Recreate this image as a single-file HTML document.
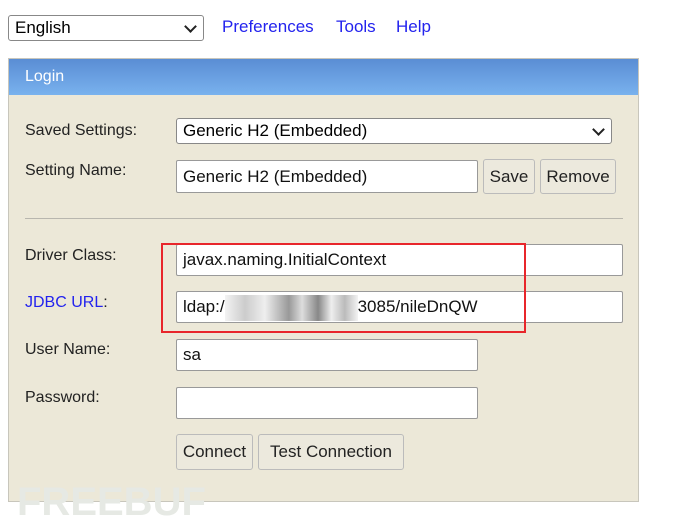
<!DOCTYPE html>
<html><head><style>
body{margin:0;width:690px;height:529px;background:#fff;position:relative;font-family:"Liberation Sans",sans-serif;overflow:hidden}
.a{position:absolute}
.sel{border:1px solid #888;border-radius:3px;background:#fff;box-sizing:border-box;font-size:17px;padding-left:6px;line-height:24px}
.inp{border:1px solid #999;border-radius:2px;background:#fff;box-sizing:border-box;font-size:17px;padding-left:6px;color:#111}
.btn{border:1px solid #bbb;border-radius:3px;background:#ece9dd;box-sizing:border-box;font-size:17px;text-align:center;color:#222}
.lbl{font-size:16px;color:#222}
.lk{font-size:17px;color:#2323ee}
.chev{position:absolute;right:8px;top:6px;width:7px;height:7px;border-right:2px solid #222;border-bottom:2px solid #222;transform:rotate(45deg)}
</style></head><body>
<div class="a sel" style="left:8px;top:15px;width:196px;height:26px">English<span class="chev"></span></div>
<div class="a lk" style="left:222px;top:17px">Preferences</div>
<div class="a lk" style="left:336px;top:17px">Tools</div>
<div class="a lk" style="left:396px;top:17px">Help</div>
<div class="a" style="left:8px;top:58px;width:631px;height:444px;border:1px solid #c8c6bc;box-sizing:border-box;background:#ece8d8"></div>
<div class="a" style="left:9px;top:59px;width:629px;height:36px;background:linear-gradient(#5a8dd4,#79b2ee);color:#fff;font-size:16px;line-height:36px;padding-left:16px;box-sizing:border-box">Login</div>
<div class="a lbl" style="left:25px;top:122px">Saved Settings:</div>
<div class="a sel" style="left:176px;top:118px;width:436px;height:26px;line-height:24px">Generic H2 (Embedded)<span class="chev"></span></div>
<div class="a lbl" style="left:25px;top:162px">Setting Name:</div>
<div class="a inp" style="left:176px;top:160px;width:302px;height:33px;line-height:31px">Generic H2 (Embedded)</div>
<div class="a btn" style="left:483px;top:159px;width:52px;height:35px;line-height:33px">Save</div>
<div class="a btn" style="left:540px;top:159px;width:76px;height:35px;line-height:33px">Remove</div>
<div class="a" style="left:25px;top:218px;width:598px;height:1px;background:#b8b6ae"></div>
<div class="a lbl" style="left:25px;top:247px">Driver Class:</div>
<div class="a inp" style="left:176px;top:244px;width:447px;height:32px;line-height:30px">javax.naming.InitialContext</div>
<div class="a lbl" style="left:25px;top:294px;color:#2323ee">JDBC URL<span style="color:#222">:</span></div>
<div class="a inp" style="left:176px;top:291px;width:447px;height:32px;line-height:30px">ldap:/<span style="display:inline-block;width:133px;height:26px;vertical-align:middle;background:linear-gradient(90deg,#f3f3f3,#ccc 15%,#eee 30%,#999 48%,#ddd 58%,#888 70%,#eee 80%,#bbb 90%,#f3f3f3)"></span>3085/nileDnQW</div>
<div class="a" style="left:161px;top:243px;width:365px;height:90px;border:2px solid #e8262b;box-sizing:border-box"></div>
<div class="a lbl" style="left:25px;top:341px">User Name:</div>
<div class="a inp" style="left:176px;top:339px;width:302px;height:32px;line-height:30px">sa</div>
<div class="a lbl" style="left:25px;top:389px">Password:</div>
<div class="a inp" style="left:176px;top:387px;width:302px;height:32px"></div>
<div class="a btn" style="left:176px;top:434px;width:77px;height:36px;line-height:34px">Connect</div>
<div class="a btn" style="left:258px;top:434px;width:146px;height:36px;line-height:34px">Test Connection</div>
<div class="a" style="left:17px;top:482px;font-size:40px;font-weight:bold;color:#e6e9e4;line-height:40px">FREEBUF</div>
</body></html>
